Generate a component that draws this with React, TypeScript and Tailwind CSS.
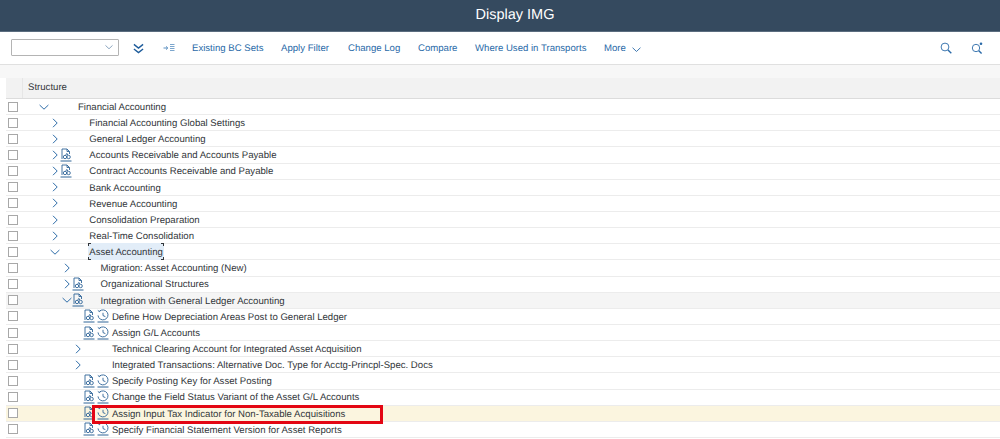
import React from 'react';

type Row = {
  label: string;
  level: number;
  arrow?: 'right' | 'down';
  doc?: boolean;
  clock?: boolean;
  active?: boolean;
  shaded?: boolean;
  marked?: boolean;
};

const rows: Row[] = [
  { label: 'Financial Accounting', level: 0, arrow: 'down' },
  { label: 'Financial Accounting Global Settings', level: 1, arrow: 'right' },
  { label: 'General Ledger Accounting', level: 1, arrow: 'right' },
  { label: 'Accounts Receivable and Accounts Payable', level: 1, arrow: 'right', doc: true },
  { label: 'Contract Accounts Receivable and Payable', level: 1, arrow: 'right', doc: true },
  { label: 'Bank Accounting', level: 1, arrow: 'right' },
  { label: 'Revenue Accounting', level: 1, arrow: 'right' },
  { label: 'Consolidation Preparation', level: 1, arrow: 'right' },
  { label: 'Real-Time Consolidation', level: 1, arrow: 'right' },
  { label: 'Asset Accounting', level: 1, arrow: 'down', active: true },
  { label: 'Migration: Asset Accounting (New)', level: 2, arrow: 'right' },
  { label: 'Organizational Structures', level: 2, arrow: 'right', doc: true },
  { label: 'Integration with General Ledger Accounting', level: 2, arrow: 'down', doc: true, shaded: true },
  { label: 'Define How Depreciation Areas Post to General Ledger', level: 3, doc: true, clock: true },
  { label: 'Assign G/L Accounts', level: 3, doc: true, clock: true },
  { label: 'Technical Clearing Account for Integrated Asset Acquisition', level: 3, arrow: 'right' },
  { label: 'Integrated Transactions: Alternative Doc. Type for Acctg-Princpl-Spec. Docs', level: 3, arrow: 'right' },
  { label: 'Specify Posting Key for Asset Posting', level: 3, doc: true, clock: true },
  { label: 'Change the Field Status Variant of the Asset G/L Accounts', level: 3, doc: true, clock: true },
  { label: 'Assign Input Tax Indicator for Non-Taxable Acquisitions', level: 3, doc: true, clock: true, marked: true },
  { label: 'Specify Financial Statement Version for Asset Reports', level: 3, doc: true, clock: true },
];

const actions = [
  { label: 'Existing BC Sets', width: 'w-[89px]' },
  { label: 'Apply Filter', width: 'w-[67px]' },
  { label: 'Change Log', width: 'w-[70px]' },
  { label: 'Compare', width: 'w-[57px]' },
  { label: 'Where Used in Transports', width: 'w-[129px]' },
];

const Chevron = ({ dir, className }: { dir: 'right' | 'down'; className?: string }) => (
  <svg viewBox="0 0 10 10" className={className} fill="none" stroke="currentColor" strokeWidth="1">
    {dir === 'right' ? <path d="M3 0.8 L7.2 5 L3 9.2" /> : <path d="M0.6 3 L5 7.2 L9.4 3" />}
  </svg>
);

const DocIcon = () => (
  <svg viewBox="0 0 12 14" className="w-[12px] h-[14px] text-[#2f6497]" fill="none" stroke="currentColor" strokeWidth="0.9">
    <path d="M2 11 V1 H7 L9.5 3.5 V6" />
    <path d="M7 1 V3.5 H9.5" />
    <circle cx="5" cy="9" r="1.7" />
    <circle cx="8.6" cy="9" r="1.7" />
    <path d="M5.8 7 L6.8 5.4 L7.8 7" />
    <path d="M0.5 13 H11.5" strokeWidth="1" />
  </svg>
);

const ClockIcon = () => (
  <svg viewBox="0 0 12 14" className="w-[12px] h-[14px] text-[#2f6497]" fill="none" stroke="currentColor" strokeWidth="0.9">
    <path d="M2.4 2.4 A5 5 0 1 1 1 6.4" />
    <path d="M0.8 1.4 L2.4 2.6 L3.8 1" />
    <path d="M6 3.8 V6.6 L8.4 7.6" />
    <path d="M0.5 13 H11.5" strokeWidth="1" />
  </svg>
);

const Corner = ({ className }: { className: string }) => (
  <span className={`absolute w-[3px] h-[3px] border-[#32363a] ${className}`} />
);

const TreeRow = ({ row }: { row: Row }) => {
  const bg = row.marked ? 'bg-[#fbf5df]' : row.shaded ? 'bg-[#f5f5f5]' : 'bg-white';
  return (
    <div className={`flex h-[16.15px] items-center border-b border-[#ececec] ${bg}`}>
      <div className="w-[17px] flex justify-start pl-[2px]">
        <span className="block w-[10px] h-[10px] bg-white border border-[#a8a8a8]" />
      </div>
      <div className="flex items-center ml-[16px]" style={{ paddingLeft: row.level * 11.3 }}>
        <div className="w-[10px] flex justify-center text-[#2f6da8]">
          {row.arrow && <Chevron dir={row.arrow} className="w-[10px] h-[10px]" />}
        </div>
        <div className="w-[14px] flex justify-start">{row.doc && <DocIcon />}</div>
        <div className="w-[15px] flex justify-start">{row.clock && <ClockIcon />}</div>
        {row.active ? (
          <div className="relative -ml-px px-px bg-[#e2edf8] h-[17px] flex items-center">
            <Corner className="top-0 left-0 border-t border-l" />
            <Corner className="top-0 right-0 border-t border-r" />
            <Corner className="bottom-0 left-0 border-b border-l" />
            <Corner className="bottom-0 right-0 border-b border-r" />
            <span className="whitespace-nowrap pt-[3px]">{row.label}</span>
          </div>
        ) : (
          <span className="whitespace-nowrap pt-[3px]">{row.label}</span>
        )}
      </div>
    </div>
  );
};

export default function App() {
  return (
    <div className="relative w-[1000px] h-[439px] overflow-hidden bg-white text-[#32363a] text-[9.6px] [text-rendering:geometricPrecision] font-['Liberation_Sans',Arial,sans-serif]">
      {/* Title bar */}
      <header className="h-[32px] pt-px bg-[#354a5f] border-b border-[#5b6d7f] flex items-center justify-center pl-[30px] text-white text-[14.5px]">
        Display IMG
      </header>

      {/* Toolbar */}
      <div className="h-[33px] border-b border-[#e0e0e0] flex items-center pl-[11px] pr-[17px] text-[#2a6aa8]">
        <div className="w-[108px] h-[17px] -mt-[2px] border border-[#b4b4b4] rounded-[1px] flex items-center justify-end pr-[5px] text-[#6f8fb0] bg-white">
          <Chevron dir="down" className="w-[8px] h-[8px]" />
        </div>
        <svg viewBox="0 0 12 12" className="w-[11px] h-[11px] ml-[14px] text-[#1d5b9a]" fill="none" stroke="currentColor" strokeWidth="1.5">
          <path d="M1 1.5 L6 5.5 L11 1.5" />
          <path d="M1 6.5 L6 10.5 L11 6.5" />
        </svg>
        <svg viewBox="0 0 12 10" className="w-[12px] h-[10px] ml-[19px] text-[#5b8fc0]" fill="none" stroke="currentColor" strokeWidth="1">
          <path d="M0.5 5 H4.5 M3 3.4 L4.8 5 L3 6.6" />
          <path d="M7 1.5 H11.5 M7 3.5 H11.5 M7 5.5 H11.5 M7 7.5 H11.5" strokeWidth="0.8" />
        </svg>
        <nav className="flex items-center ml-[17px] pt-[3px]">
          {actions.map((a) => (
            <span key={a.label} className={`${a.width} whitespace-nowrap`}>{a.label}</span>
          ))}
          <span className="whitespace-nowrap">More</span>
          <Chevron dir="down" className="w-[9px] h-[9px] ml-[6px]" />
        </nav>
        <div className="ml-auto flex items-center gap-[19px]">
          <svg viewBox="0 0 12 12" className="w-[12px] h-[12px]" fill="none" stroke="currentColor">
            <circle cx="5" cy="5" r="3.9" strokeWidth="0.9" />
            <path d="M8 8 L11.3 11.3" strokeWidth="1.4" />
          </svg>
          <svg viewBox="0 0 12 12" className="w-[12px] h-[12px]" fill="none" stroke="currentColor">
            <circle cx="5" cy="6" r="3.7" strokeWidth="0.9" />
            <path d="M7.8 8.8 L10.6 11.5" strokeWidth="1.4" />
            <circle cx="10" cy="1.8" r="1.3" fill="currentColor" stroke="none" />
          </svg>
        </div>
      </div>

      {/* Tree table */}
      <div className="h-[13px] bg-[#f7f7f7]" />
      <div className="pl-[6px] bg-white">
        <div className="flex h-[21px] items-center bg-[#f2f2f2] border-b border-[#dcdcdc]">
          <div className="w-[17px] h-full border-r border-[#e6e6e6]" />
          <span className="ml-[5px]">Structure</span>
        </div>
        {rows.map((r) => (
          <TreeRow key={r.label} row={r} />
        ))}
      </div>

      {/* Red annotation */}
      <div className="absolute left-[92px] top-[405px] w-[291px] h-[19px] border-[3px] border-[#e30613]" />
    </div>
  );
}
